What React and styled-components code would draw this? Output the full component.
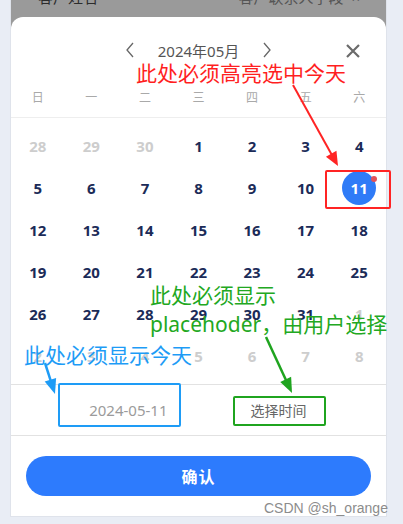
import React from "react";
import styled, { createGlobalStyle } from "styled-components";

const GlobalStyle = createGlobalStyle`
  body {
    margin: 0;
    background: #e9edf5;
    font-family: "Noto Sans", "Noto Sans CJK SC", sans-serif;
  }
`;

const WEEK = ["日", "一", "二", "三", "四", "五", "六"];

const buildDays = () => {
  const days = [28, 29, 30].map((d) => ({ d, muted: true }));
  for (let d = 1; d <= 31; d++) days.push({ d, muted: false });
  for (let d = 1; d <= 8; d++) days.push({ d, muted: true });
  return days;
};

const Page = styled.div`
  position: relative;
  width: 403px;
  height: 524px;
  padding-left: 11px;
  box-sizing: border-box;
  overflow: hidden;
`;

const Screen = styled.div`
  width: 375px;
  height: 516px;
  display: flex;
  flex-direction: column;
  background: #9a9a9a;
  box-shadow: 0 0 0 1px #dfe3eb;
`;

const MaskRow = styled.div`
  height: 17px;
  overflow: hidden;
  display: flex;
  justify-content: space-between;
  padding: 0 26px 0 27px;
  font-size: 15px;
  line-height: 20px;
  & > span {
    margin-top: -13px;
  }
`;

const MaskLabel = styled.span`
  color: ${(p) => p.$tone};
`;

const Sheet = styled.div`
  flex: 1;
  display: flex;
  flex-direction: column;
  background: #fff;
  border-radius: 12px 12px 0 0;
`;

const Header = styled.div`
  position: relative;
  height: 66px;
  display: flex;
  align-items: center;
  justify-content: center;
  gap: 23px;
`;

const Title = styled.span`
  font-size: 15px;
  color: #555;
`;

const NavBtn = styled.svg`
  width: 10px;
  height: 16px;
  fill: none;
  stroke: #666;
  stroke-width: 1.3;
`;

const Close = styled.svg`
  position: absolute;
  right: 26px;
  top: 27px;
  width: 14px;
  height: 14px;
  stroke: #6b6b6b;
  stroke-width: 2.2;
`;

const WeekRow = styled.div`
  display: grid;
  grid-template-columns: repeat(7, 1fr);
  height: 30px;
  padding-bottom: 4px;
  line-height: 30px;
  text-align: center;
  font-size: 12px;
  color: #a9a9a9;
  border-bottom: 1px solid #eeeeee;
`;

const DayGrid = styled.div`
  display: grid;
  grid-template-columns: repeat(7, 1fr);
  grid-auto-rows: 42px;
  padding: 7px 0;
  border-bottom: 1px solid #e2e2e2;
`;

const Cell = styled.div`
  display: flex;
  align-items: center;
  justify-content: center;
`;

const Day = styled.span`
  position: relative;
  width: 34px;
  height: 34px;
  border-radius: 50%;
  display: flex;
  align-items: center;
  justify-content: center;
  font-size: 15px;
  font-weight: 700;
  color: ${(p) => (p.$active ? "#fff" : p.$muted ? "#cdcdcd" : "#1b2b58")};
  background: ${(p) => (p.$active ? "#2f7bf7" : "transparent")};
`;

const Dot = styled.i`
  position: absolute;
  top: 5px;
  right: -1px;
  width: 6px;
  height: 6px;
  border-radius: 50%;
  background: #e2515a;
`;

const TimeRow = styled.div`
  display: grid;
  grid-template-columns: 1fr 1fr;
  height: 50px;
  align-items: center;
  border-bottom: 1px solid #e2e2e2;
`;

const DateValue = styled.span`
  text-align: right;
  padding-right: 31px;
  font-size: 15px;
  color: #9b9b9b;
`;

const TimeHolder = styled.span`
  padding-left: 52px;
  font-size: 14px;
  color: #666;
`;

const Footer = styled.div`
  padding: 20px 15px;
`;

const Confirm = styled.button`
  width: 100%;
  height: 40px;
  border: none;
  border-radius: 20px;
  background: #2d7bfd;
  color: #fff;
  font-family: inherit;
  font-size: 16px;
  font-weight: 700;
  letter-spacing: 1px;
`;

/* callouts drawn over the sheet */
const Note = styled.div`
  position: absolute;
  top: ${(p) => p.$top}px;
  left: ${(p) => p.$left}px;
  color: ${(p) => p.$color};
  font-size: 21px;
  line-height: 30px;
  white-space: nowrap;
  pointer-events: none;
`;

const Frame = styled.div`
  position: absolute;
  top: ${(p) => p.$y}px;
  left: ${(p) => p.$x}px;
  width: ${(p) => p.$w}px;
  height: ${(p) => p.$h}px;
  box-sizing: border-box;
  border: 2px solid ${(p) => p.$color};
  border-radius: 2px;
  pointer-events: none;
`;

const Overlay = styled.svg`
  position: absolute;
  inset: 0;
  width: 403px;
  height: 524px;
  pointer-events: none;
`;

const Watermark = styled.span`
  position: absolute;
  left: 264px;
  top: 500px;
  font-family: "Liberation Sans", Arial, sans-serif;
  font-size: 14px;
  color: #8c8c8c;
  white-space: nowrap;
`;

const Arrow = ({ from, to, color, width = 2, head = 14, spread = 6 }) => {
  const dx = to[0] - from[0];
  const dy = to[1] - from[1];
  const len = Math.hypot(dx, dy);
  const ux = dx / len;
  const uy = dy / len;
  const bx = to[0] - ux * head;
  const by = to[1] - uy * head;
  const wing = `${bx - uy * spread},${by + ux * spread} ${to[0]},${to[1]} ${
    bx + uy * spread
  },${by - ux * spread}`;
  return (
    <g>
      <line x1={from[0]} y1={from[1]} x2={bx + ux * 2} y2={by + uy * 2} stroke={color} strokeWidth={width} />
      <polygon points={wing} fill={color} />
    </g>
  );
};

export default function App() {
  const days = buildDays();
  return (
    <Page>
      <GlobalStyle />
      <Screen>
        <MaskRow>
          <MaskLabel $tone="#2c2c2c">客户姓名</MaskLabel>
          <MaskLabel $tone="#555">客户联系人字段 &nbsp;×</MaskLabel>
        </MaskRow>
        <Sheet>
          <Header>
            <NavBtn viewBox="0 0 10 16">
              <path d="M8 1 L2 8 L8 15" />
            </NavBtn>
            <Title>2024年05月</Title>
            <NavBtn viewBox="0 0 10 16">
              <path d="M2 1 L8 8 L2 15" />
            </NavBtn>
            <Close viewBox="0 0 14 14">
              <path d="M1 1 L13 13 M13 1 L1 13" />
            </Close>
          </Header>
          <WeekRow>
            {WEEK.map((w) => (
              <span key={w}>{w}</span>
            ))}
          </WeekRow>
          <DayGrid>
            {days.map((item, i) => {
              const active = !item.muted && item.d === 11;
              return (
                <Cell key={i}>
                  <Day $muted={item.muted} $active={active}>
                    {item.d}
                    {active && <Dot />}
                  </Day>
                </Cell>
              );
            })}
          </DayGrid>
          <TimeRow>
            <DateValue>2024-05-11</DateValue>
            <TimeHolder>选择时间</TimeHolder>
          </TimeRow>
          <Footer>
            <Confirm>确认</Confirm>
          </Footer>
        </Sheet>
      </Screen>

      <Frame $x={325} $y={170} $w={66} $h={39} $color="#ff2424" />
      <Frame $x={58} $y={383} $w={123} $h={44} $color="#1e9cf6" />
      <Frame $x={233} $y={396} $w={93} $h={30} $color="#1fa41f" />

      <Overlay viewBox="0 0 403 524">
        <Arrow from={[293, 85]} to={[338, 166]} color="#ff2424" width={2} />
        <Arrow from={[45, 363]} to={[55, 394]} color="#1e9cf6" width={2.5} head={15} spread={6} />
        <Arrow from={[266, 337]} to={[292, 393]} color="#1fa41f" width={2.5} head={15} spread={6} />
      </Overlay>

      <Note $top={58} $left={136} $color="#ff1f1f">此处必须高亮选中今天</Note>
      <Note $top={280} $left={150} $color="#22a822">此处必须显示</Note>
      <Note $top={309} $left={150} $color="#22a822">placehoder，由用户选择</Note>
      <Note $top={340} $left={24} $color="#1e9cf6">此处必须显示今天</Note>

      <Watermark>CSDN @sh_orange</Watermark>
    </Page>
  );
}
